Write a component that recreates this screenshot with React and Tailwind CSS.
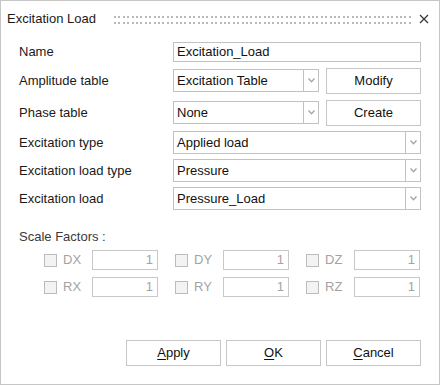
import React from "react";

const font = { fontFamily: '"Liberation Sans", Arial, sans-serif' };

function Arrow() {
  return (
    <svg width="7" height="5" viewBox="0 0 7 5" className="block">
      <path d="M0.5 0.5 L3.5 3.8 L6.5 0.5" fill="none" stroke="#a6a6a6" strokeWidth="1.4" />
    </svg>
  );
}

function Grip() {
  const dots = [];
  for (let i = 0; i < 68; i++) {
    const x = Math.round(i * 4.4);
    dots.push(<rect key={"a" + i} x={x} y={0} width="2" height="2" fill="#b9b9b9" />);
    dots.push(<rect key={"b" + i} x={x} y={6} width="2" height="2" fill="#b9b9b9" />);
  }
  return (
    <svg width="298" height="8" viewBox="0 0 298 8" shapeRendering="crispEdges" className="block">
      {dots}
    </svg>
  );
}

function Combo({ value, full }) {
  return (
    <div className={"flex h-[23px] " + (full ? "flex-1" : "w-[146px]")}>
      <div className="flex-1 border border-[#c2c2c2] flex items-center pl-[3px] text-[13px] text-[#111]">
        {value}
      </div>
      <div className="w-[15px] border border-l-0 border-[#c2c2c2] flex items-center justify-center">
        <Arrow />
      </div>
    </div>
  );
}

function Row({ label, children, className }) {
  return (
    <div className={"flex items-center " + className}>
      <div className="w-[154px] text-[13px] text-[#1a1a1a]">{label}</div>
      <div className="flex-1 flex items-center">{children}</div>
    </div>
  );
}

function Btn({ children, w }) {
  return (
    <div className={"h-[26px] border border-[#c6c6c6] bg-white flex items-center justify-center text-[13px] text-[#111] " + w}>
      {children}
    </div>
  );
}

function Factor({ name }) {
  return (
    <div className="flex items-center w-[114px] h-[20px]">
      <div className="w-[13px] h-[13px] border border-[#bcbcbc] bg-[#f3f3f3]" />
      <div className="w-[35px] pl-[6px] text-[13px] text-[#a3a3a3]">{name}</div>
      <div className="w-[66px] h-[20px] border border-[#c8c8c8] flex items-center justify-end pr-[4px] text-[13px] text-[#a3a3a3]">
        1
      </div>
    </div>
  );
}

export default function App() {
  return (
    <div style={font} className="w-[440px] h-[385px] border border-[#c6c6c6] bg-white flex flex-col overflow-hidden">
      <div className="h-[36px] flex items-center pl-[6px] shrink-0">
        <div className="text-[13px] text-[#1a1a1a] w-[107px]">Excitation Load</div>
        <div className="mt-[1px]">
          <Grip />
        </div>
        <div className="ml-[7px] mt-[-1px]">
          <svg width="10" height="10" viewBox="0 0 10 10" className="block">
            <path d="M1 1 L9 9 M9 1 L1 9" stroke="#333" strokeWidth="1.2" />
          </svg>
        </div>
      </div>
      <div className="flex-1 flex flex-col pl-[18px] pr-[18px]">
        <Row label="Name" className="mt-[5px] h-[20px]">
          <div className="flex-1 h-[20px] border border-[#c2c2c2] flex items-center pl-[3px] text-[13px] text-[#111]">
            Excitation_Load
          </div>
        </Row>
        <Row label="Amplitude table" className="mt-[6px] h-[25px]">
          <Combo value="Excitation Table" />
          <div className="ml-[7px]">
            <Btn w="w-[95px] h-[25px]">Modify</Btn>
          </div>
        </Row>
        <Row label="Phase table" className="mt-[7px] h-[25px]">
          <Combo value="None" />
          <div className="ml-[7px]">
            <Btn w="w-[95px] h-[25px]">Create</Btn>
          </div>
        </Row>
        <Row label="Excitation type" className="mt-[7px] h-[21px]">
          <Combo value="Applied load" full />
        </Row>
        <Row label="Excitation load type" className="mt-[7px] h-[21px]">
          <Combo value="Pressure" full />
        </Row>
        <Row label="Excitation load" className="mt-[7px] h-[21px]">
          <Combo value="Pressure_Load" full />
        </Row>
        <div className="mt-[20px] h-[16px] flex items-center text-[13px] text-[#3a3a3a]">Scale Factors :</div>
        <div className="mt-[5px] pl-[25px] flex gap-[17px]">
          <Factor name="DX" />
          <Factor name="DY" />
          <Factor name="DZ" />
        </div>
        <div className="mt-[7px] pl-[25px] flex gap-[17px]">
          <Factor name="RX" />
          <Factor name="RY" />
          <Factor name="RZ" />
        </div>
        <div className="flex-1" />
        <div className="flex justify-end gap-[5px] mb-[18px]">
          <Btn w="w-[95px]">
            <span><span className="underline underline-offset-2">A</span>pply</span>
          </Btn>
          <Btn w="w-[95px]">
            <span><span className="underline underline-offset-2">O</span>K</span>
          </Btn>
          <Btn w="w-[95px]">
            <span><span className="underline underline-offset-2">C</span>ancel</span>
          </Btn>
        </div>
      </div>
    </div>
  );
}
